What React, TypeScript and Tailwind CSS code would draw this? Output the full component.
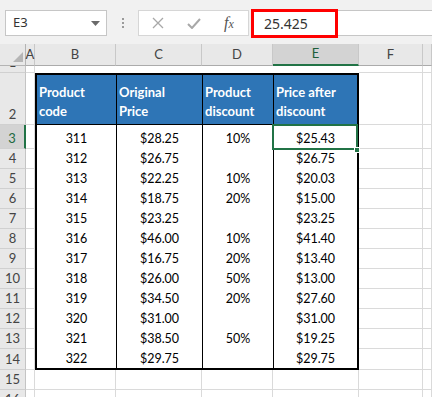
import React from "react";

const rows = [
  { code: "311", price: "$28.25", disc: "10%", after: "$25.43" },
  { code: "312", price: "$26.75", disc: "", after: "$26.75" },
  { code: "313", price: "$22.25", disc: "10%", after: "$20.03" },
  { code: "314", price: "$18.75", disc: "20%", after: "$15.00" },
  { code: "315", price: "$23.25", disc: "", after: "$23.25" },
  { code: "316", price: "$46.00", disc: "10%", after: "$41.40" },
  { code: "317", price: "$16.75", disc: "20%", after: "$13.40" },
  { code: "318", price: "$26.00", disc: "50%", after: "$13.00" },
  { code: "319", price: "$34.50", disc: "20%", after: "$27.60" },
  { code: "320", price: "$31.00", disc: "", after: "$31.00" },
  { code: "321", price: "$38.50", disc: "50%", after: "$19.25" },
  { code: "322", price: "$29.75", disc: "", after: "$29.75" },
];

const sheetFont = { fontFamily: "Lato, 'Noto Sans', sans-serif" };
const uiFont = { fontFamily: "'Noto Sans', 'Open Sans', sans-serif" };

function RowHead({ n, active }: { n: number; active?: boolean }) {
  return (
    <div
      className={`flex items-end justify-center overflow-hidden border-b border-[#d0d0d0] text-[13px] leading-[20px] ${
        active ? "bg-[#d3d3d3] text-[#1e6b41] border-r-2 border-r-[#217346]" : "bg-[#e8e8e8] text-[#444] border-r border-r-[#c4c4c4]"
      }`}
    >
      {n}
    </div>
  );
}

function Blank() {
  return <div className="bg-white border-r border-b border-[#dadada]" />;
}

function Toolbar() {
  return (
    <div className="h-[44px] bg-[#f1f1f1] flex items-start pt-[10px] pl-[5px]" style={uiFont}>
      <div className="w-[102px] h-[26px] bg-white border border-[#c6c6c6] flex items-center justify-between pl-[7px] pr-[6px] text-[13px] text-[#333]">
        <span>E3</span>
        <svg width="9" height="5" viewBox="0 0 9 5">
          <path d="M0 0h9L4.5 5z" fill="#6a6a6a" />
        </svg>
      </div>
      <div className="w-[31px] h-[26px] flex flex-col items-center justify-center gap-[2px]">
        <span className="w-[2px] h-[2px] bg-[#9a9a9a]" />
        <span className="w-[2px] h-[2px] bg-[#9a9a9a]" />
        <span className="w-[2px] h-[2px] bg-[#9a9a9a]" />
      </div>
      <div className="w-[111px] h-[26px] bg-white border border-[#d6d6d6] flex items-center">
        <div className="w-[38px] flex justify-center">
          <svg width="12" height="12" viewBox="0 0 12 12">
            <path d="M1 1l10 10M11 1L1 11" stroke="#a8a8a8" strokeWidth="1.3" />
          </svg>
        </div>
        <div className="w-[34px] flex justify-center">
          <svg width="14" height="11" viewBox="0 0 14 11">
            <path d="M1 6l4 4 8-9" stroke="#a8a8a8" strokeWidth="2" fill="none" />
          </svg>
        </div>
        <div className="w-[36px] flex justify-center items-baseline text-[#555] italic text-[16px]" style={{ fontFamily: "'Liberation Serif', serif" }}>
          f<span className="text-[12px]">x</span>
        </div>
      </div>
      <div className="relative flex-1 h-[26px] ml-[2px] bg-white border-y border-[#c6c6c6] flex items-center pl-[13px] text-[14px] text-[#333]">
        25.425
        <div className="absolute left-0 top-[-2px] w-[87px] h-[29px] border-[3px] border-[#ff0000]" />
      </div>
    </div>
  );
}

export default function App() {
  return (
    <div className="w-[432px] h-[397px] overflow-hidden bg-white">
      <Toolbar />
      <div
        className="grid grid-cols-[26px_9px_81px_86px_71px_86px_64px_1fr] grid-rows-[22px_7px_52px_24px_repeat(10,20px)_21px_20px_20px]"
        style={sheetFont}
      >
        {/* column headers */}
        <div className="bg-[#e8e8e8] border-r border-b border-[#b4b4b4] flex items-end justify-end pr-[2px] pb-[3px]">
          <svg width="10" height="10" viewBox="0 0 10 10">
            <path d="M10 0v10H0z" fill="#b5b5b5" />
          </svg>
        </div>
        {["A", "B", "C", "D"].map((c) => (
          <div key={c} className="bg-[#e8e8e8] border-r border-r-[#c8c8c8] border-b border-b-[#ababab] flex items-center justify-center text-[13px] text-[#444]">
            {c}
          </div>
        ))}
        <div className="bg-[#d3d3d3] border-r border-r-[#c8c8c8] border-b-2 border-b-[#217346] flex items-center justify-center text-[13px] text-[#1e5e3a]">
          E
        </div>
        {["F", ""].map((c, i) => (
          <div key={i} className="bg-[#e8e8e8] border-r border-r-[#c8c8c8] border-b border-b-[#ababab] flex items-center justify-center text-[13px] text-[#444]">
            {c}
          </div>
        ))}

        {/* row 1 */}
        <RowHead n={1} />
        <Blank />
        <div className="col-span-4 bg-white" />
        <Blank />
        <Blank />

        {/* table B2:E14 */}
        <div className="col-start-3 col-end-7 row-start-3 row-end-16 border-2 border-black grid grid-cols-[80px_86px_71px_1fr] grid-rows-[50px_24px_repeat(10,20px)_1fr] bg-white text-[12.5px] text-black">
          {["Product|code", "Original|Price", "Product|discount", "Price after|discount"].map((h, i) => (
            <div
              key={h}
              className={`bg-[#2e75b6] text-white font-bold border-b border-black flex flex-col justify-end pl-[2px] pb-[3px] leading-[19px] text-[13px] ${
                i < 3 ? "border-r" : ""
              }`}
            >
              {h.split("|").map((t) => (
                <span key={t}>{t}</span>
              ))}
            </div>
          ))}
          {rows.map((r, ri) => (
            <React.Fragment key={r.code}>
              <div className="border-r border-black flex items-end justify-center leading-[20px]">{r.code}</div>
              <div className="border-r border-black flex items-end justify-center leading-[20px]">{r.price}</div>
              <div className="border-r border-black flex items-end justify-center leading-[20px]">{r.disc}</div>
              <div className="relative flex items-end justify-center leading-[20px]">
                {r.after}
                {ri === 0 && (
                  <>
                    <div className="absolute left-[-2px] top-[-1px] right-[-1px] bottom-[-1px] border-2 border-[#217346]" />
                    <div className="absolute right-[-3px] bottom-[-4px] w-[6px] h-[6px] bg-[#217346] border border-white" />
                  </>
                )}
              </div>
            </React.Fragment>
          ))}
        </div>

        {/* rows 2..14 side cells */}
        {Array.from({ length: 13 }, (_, i) => i + 2).map((n) => (
          <React.Fragment key={n}>
            <RowHead n={n} active={n === 3} />
            <Blank />
            <Blank />
            <Blank />
          </React.Fragment>
        ))}

        {/* rows 15, 16 */}
        {[15, 16].map((n) => (
          <React.Fragment key={n}>
            <RowHead n={n} />
            {Array.from({ length: 7 }, (_, i) => (
              <Blank key={i} />
            ))}
          </React.Fragment>
        ))}
      </div>
    </div>
  );
}
